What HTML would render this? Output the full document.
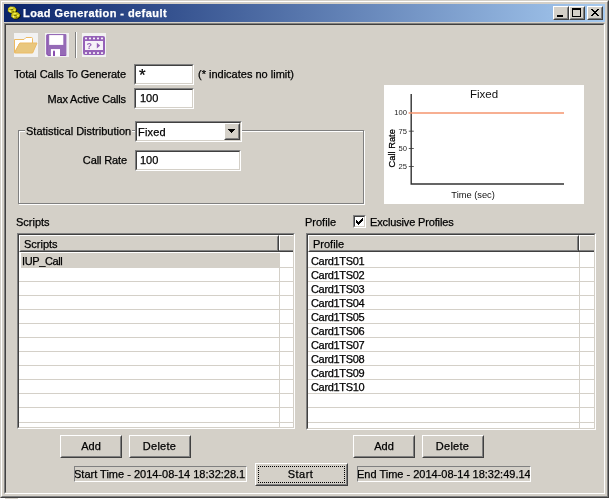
<!DOCTYPE html>
<html>
<head>
<meta charset="utf-8">
<title>Load Generation - default</title>
<style>
html,body{margin:0;padding:0;}
body{width:609px;height:499px;background:#fff;position:relative;overflow:hidden;
  font-family:"Liberation Sans",sans-serif;font-size:11px;color:#000;line-height:13px;-webkit-text-stroke-width:0.25px;}
.abs,.t,.lbl,.inp,.btn,.hl,.vl{position:absolute;}
#win{position:absolute;left:0;top:0;width:609px;height:498px;background:#d4d0c8;will-change:transform;}
.t{white-space:nowrap;height:13px;line-height:13px;}
.r{text-align:right;}
.inp{background:#fff;box-sizing:border-box;border:1px solid;border-color:#808080 #fff #fff #808080;}
.inp:before{content:"";position:absolute;left:0;top:0;right:0;bottom:0;border:1px solid;border-color:#404040 #d4d0c8 #d4d0c8 #404040;}
.btn{box-sizing:border-box;background:#d4d0c8;border:1px solid;border-color:#fff #404040 #404040 #fff;text-align:center;}
.btn:before{content:"";position:absolute;left:0;top:0;right:0;bottom:0;border:1px solid;border-color:#d4d0c8 #808080 #808080 #d4d0c8;}
.btn span{position:absolute;left:0;right:0;white-space:nowrap;}
.pane{position:absolute;box-sizing:border-box;background:#fff;border:1px solid;border-color:#808080 #fff #fff #808080;}
.pane:before{content:"";position:absolute;left:0;top:0;right:0;bottom:0;border:1px solid;border-color:#404040 #d4d0c8 #d4d0c8 #404040;}
.hd{position:absolute;box-sizing:border-box;background:#d4d0c8;border:1px solid;border-color:#fff #404040 #404040 #fff;}
.hd:before{content:"";position:absolute;left:0;top:0;right:0;bottom:0;border:1px solid;border-color:#d4d0c8 #808080 #808080 #d4d0c8;}
.gl{position:absolute;background:#d4d0c8;}
.st{position:absolute;box-sizing:border-box;border:1px solid;border-color:#808080 #fff #fff #808080;overflow:hidden;}
.cap{position:absolute;box-sizing:border-box;width:16px;height:14px;top:6px;background:#d4d0c8;border:1px solid;border-color:#fff #404040 #404040 #fff;}
.cap:before{content:"";position:absolute;left:0;top:0;right:0;bottom:0;border:1px solid;border-color:#d4d0c8 #808080 #808080 #d4d0c8;}
</style>
</head>
<body>
<div id="win">
  <!-- outer window frame -->
  <div class="abs" style="left:0;top:0;width:609px;height:498px;box-sizing:border-box;border:1px solid;border-color:#d4d0c8 #404040 #404040 #d4d0c8;"></div>
  <div class="abs" style="left:1px;top:1px;width:607px;height:496px;box-sizing:border-box;border:1px solid;border-color:#fff #808080 #808080 #fff;"></div>

  <!-- title bar -->
  <div class="abs" id="title" style="left:4px;top:4px;width:601px;height:18px;background:linear-gradient(to right,#0a246a 0%,#a6caf0 100%);"></div>
  <svg class="abs" style="left:6px;top:5px" width="16" height="16" viewBox="0 0 16 16">
    <g fill="#101008">
      <path d="M2.6 3.6 L4.6 2 L8.8 2.2 L11.3 4.6 L10.8 6.8 L8.6 8.6 L5 8.8 L2.4 7 Z"/>
      <path d="M6 9.2 L8 7.4 L12.4 7.6 L14.8 10 L14.4 12.2 L12 14.2 L8.6 14.6 L5.8 12.4 Z"/>
    </g>
    <g fill="#c4bc10">
      <path d="M2 3.2 L4.2 1.6 L8.2 1.8 L10.4 4 L10 6.2 L8 7.8 L4.4 8 L1.8 6.2 Z"/>
      <path d="M5.4 8.8 L7.6 7 L11.8 7.2 L14 9.4 L13.6 11.6 L11.4 13.4 L8 13.8 L5.2 11.8 Z"/>
    </g>
    <g fill="#f2ee50">
      <path d="M3 3 L5 2.2 L7.4 2.6 L6 3.6 L3.6 4 Z M2.4 5.4 L4 5 L5.4 6.4 L4 7.2 Z M7.4 4.6 L9.4 4.4 L9 5.8 L7.6 6 Z"/>
      <path d="M6.4 9 L8.6 7.8 L11 8.2 L9.4 9.2 L7 9.6 Z M6 11 L7.6 10.6 L8.8 12 L7.6 12.8 Z M11 10 L13 9.8 L12.6 11.4 L11.2 11.6 Z"/>
    </g>
    <g fill="#5a5608">
      <path d="M4.4 4.4 L7 4 L7.2 4.8 L4.6 5.2 Z M8 10.2 L10.6 9.8 L10.8 10.6 L8.2 11 Z M6.2 6.6 L8 6.2 L8.2 7 L6.6 7.4 Z M9.8 12 L11.4 11.8 L11.4 12.6 L10 12.8 Z"/>
    </g>
    <g fill="#e8e8d8"><rect x="3.4" y="5.6" width="1.2" height="1"/><rect x="7" y="11.2" width="1.2" height="1"/><rect x="5.6" y="2.8" width="1" height="0.8"/></g>
  </svg>
  <div class="t" style="left:23px;top:7px;color:#fff;font-weight:bold;letter-spacing:0.43px;">Load Generation - default</div>

  <!-- caption buttons -->
  <div class="cap" style="left:553px;"><div class="abs" style="left:3px;top:8px;width:6px;height:2px;background:#000"></div></div>
  <div class="cap" style="left:569px;"><div class="abs" style="left:2px;top:1px;width:9px;height:9px;box-sizing:border-box;border:1px solid #000;border-top-width:2px;"></div></div>
  <div class="cap" style="left:587px;">
    <svg class="abs" style="left:3px;top:2px" width="8" height="7" viewBox="0 0 8 7" shape-rendering="crispEdges"><path d="M0 0h2v1h-2zM6 0h2v1h-2zM1 1h2v1h-2zM5 1h2v1h-2zM2 2h4v1h-4zM3 3h2v1h-2zM2 4h4v1h-4zM1 5h2v1h-2zM5 5h2v1h-2zM0 6h2v1h-2zM6 6h2v1h-2z" fill="#000"/></svg>
  </div>

  <!-- client sunken edge -->
  <div class="abs" style="left:4px;top:23px;width:601px;height:471px;box-sizing:border-box;border:1px solid;border-color:#808080 #fff #fff #808080;"></div>
  <div class="abs" style="left:5px;top:24px;width:599px;height:469px;box-sizing:border-box;border:1px solid;border-color:#404040 #d4d0c8 #d4d0c8 #404040;"></div>

  <!-- toolbar -->
  <svg class="abs" style="left:14px;top:33px" width="24" height="24" viewBox="0 0 24 24">
    <rect width="24" height="24" fill="#f2f2f2"/>
    <path d="M0.5 19.5 L0.5 6.5 L10 6.5 L12 4.5 L17.5 4.5 Q18.5 4.5 18.5 5.5 L18.5 10.5 L5.5 10.5 Z" fill="#fff" stroke="#edba62" stroke-width="1"/>
    <path d="M5.8 10 L23 10 L18.6 20 L0.6 20 Z" fill="#e9c77e" stroke="#ebbb66" stroke-width="1" stroke-linejoin="round"/>
  </svg>
  <svg class="abs" style="left:45px;top:33px" width="24" height="24" viewBox="0 0 24 24">
    <rect width="24" height="24" fill="#f2f2f2"/>
    <path d="M2.8 1 L20.3 1 Q21.4 1 21.4 2.1 L21.4 21.9 Q21.4 23 20.3 23 L3.2 23 L1.4 21.4 L1.4 2.3 Q1.4 1 2.8 1 Z" fill="#956ab6"/>
    <path d="M1.9 2.3 L1.9 21.2 L3.4 22.5 L20.3 22.5 Q20.9 22.5 20.9 21.9" fill="none" stroke="#8a4fb0" stroke-width="1"/>
    <rect x="4.2" y="2.1" width="14.1" height="9.8" fill="#fff"/>
    <rect x="5.9" y="16.1" width="9.1" height="6.9" fill="#fff"/>
    <path d="M8 23 L8 18.4 Q8 17.4 9 17.4 Q10 17.4 10 18.4 L10 23 Z" fill="#8a4fb0"/>
  </svg>
  <div class="abs" style="left:75px;top:32px;width:1px;height:26px;background:#808080"></div>
  <div class="abs" style="left:76px;top:32px;width:1px;height:26px;background:#fff"></div>
  <svg class="abs" style="left:82px;top:33px" width="24" height="24" viewBox="0 0 24 24">
    <rect width="24" height="24" fill="#f2f2f2"/>
    <rect x="1" y="3" width="22" height="19" rx="2" ry="2" fill="#9561b8"/>
    <rect x="3" y="8" width="18" height="9" fill="#f6f2f8"/>
    <g fill="#fff">
      <rect x="3.1" y="4.6" width="1.8" height="1.7"/><rect x="7.1" y="4.6" width="1.8" height="1.7"/><rect x="11.1" y="4.6" width="1.8" height="1.7"/><rect x="15.1" y="4.6" width="1.8" height="1.7"/><rect x="19.1" y="4.6" width="1.8" height="1.7"/>
      <rect x="3.1" y="19.2" width="1.8" height="1.7"/><rect x="7.1" y="19.2" width="1.8" height="1.7"/><rect x="11.1" y="19.2" width="1.8" height="1.7"/><rect x="15.1" y="19.2" width="1.8" height="1.7"/><rect x="19.1" y="19.2" width="1.8" height="1.7"/>
    </g>
    <text x="7.3" y="15.6" font-family="Liberation Sans, sans-serif" font-size="9" font-weight="bold" fill="#9561b8" text-anchor="middle">?</text>
    <path d="M14.8 9.8 L18.2 12.6 L14.8 15.4 Z" fill="#9561b8"/>
  </svg>

  <!-- form fields -->
  <div class="t r" style="left:0;width:126px;top:68px;letter-spacing:-0.09px;">Total Calls To Generate</div>
  <div class="inp" style="left:134px;top:64px;width:60px;height:21px;"></div>
  <div class="t" style="left:139px;top:67px;font-size:17px;line-height:17px;height:17px;">*</div>
  <div class="t" style="left:198px;top:68px;">(* indicates no limit)</div>

  <div class="t r" style="left:0;width:126px;top:93px;letter-spacing:-0.13px;">Max Active Calls</div>
  <div class="inp" style="left:134px;top:88px;width:60px;height:21px;"></div>
  <div class="t" style="left:140px;top:92px;">100</div>

  <!-- group box -->
  <div class="abs" style="left:19px;top:131px;width:346px;height:74px;box-sizing:border-box;border:1px solid #fff;"></div>
  <div class="abs" style="left:18px;top:130px;width:346px;height:74px;box-sizing:border-box;border:1px solid #808080;"></div>
  <div class="abs" style="left:25px;top:128px;width:217px;height:6px;background:#d4d0c8;"></div>
  <div class="abs" style="left:132px;top:130px;width:3px;height:1px;background:#808080;"></div>
  <div class="abs" style="left:132px;top:131px;width:3px;height:1px;background:#fff;"></div>
  <div class="t" style="left:26px;top:125px;">Statistical Distribution</div>

  <div class="inp" style="left:135px;top:121px;width:107px;height:21px;"></div>
  <div class="t" style="left:138px;top:126px;letter-spacing:0.2px;">Fixed</div>
  <div class="btn" style="left:224px;top:123px;width:16px;height:17px;">
    <svg class="abs" style="left:3px;top:5px" width="7" height="4" viewBox="0 0 7 4" shape-rendering="crispEdges"><path d="M0 0h7v1h-7zM1 1h5v1h-5zM2 2h3v1h-3zM3 3h1v1h-1z" fill="#000"/></svg>
  </div>

  <div class="t r" style="left:0;width:127px;top:154px;letter-spacing:-0.12px;">Call Rate</div>
  <div class="inp" style="left:135px;top:150px;width:106px;height:21px;"></div>
  <div class="t" style="left:140px;top:154px;">100</div>

  <!-- chart -->
  <svg class="abs" style="left:384px;top:85px" width="200" height="119" viewBox="0 0 200 119" font-family="Liberation Sans, sans-serif">
    <rect width="200" height="119" fill="#fff"/>
    <text x="100" y="13" font-size="11.5" text-anchor="middle" fill="#111">Fixed</text>
    <path d="M27.2 9 L27.2 99 L180 99" fill="none" stroke="#333" stroke-width="1.4"/>
    <g stroke="#333" stroke-width="0.8"><path d="M24.8 46.2h5M24.8 63.5h5M24.8 81.5h5"/></g>
    <path d="M24.6 28 L180 28" stroke="#f4956e" stroke-width="1.7" fill="none"/>
    <g font-size="7.6" fill="#222" text-anchor="end">
      <text x="23" y="30.2">100</text><text x="23" y="48.6">75</text><text x="23" y="65.9">50</text><text x="23" y="83.9">25</text>
    </g>
    <text transform="translate(10.6,63.3) rotate(-90)" font-size="9.3" text-anchor="middle" fill="#000" stroke="#000" stroke-width="0.25">Call Rate</text>
    <text x="89.1" y="113.3" font-size="9.3" text-anchor="middle" fill="#111">Time (sec)</text>
  </svg>

  <!-- Scripts -->
  <div class="t" style="left:16px;top:216px;">Scripts</div>
  <div class="pane" style="left:17px;top:233px;width:278px;height:196px;"></div>
  <div class="hd" style="left:19px;top:235px;width:260px;height:17px;"></div>
  <div class="abs" style="left:279px;top:235px;width:14px;height:17px;background:#d4d0c8;border-left:1px solid #fff;border-top:1px solid #fff;box-sizing:border-box;"></div>
  <div class="abs" style="left:279px;top:250px;width:14px;height:1px;background:#808080;"></div>
  <div class="abs" style="left:279px;top:251px;width:14px;height:1px;background:#404040;"></div>
  <div class="t" style="left:24px;top:238px;">Scripts</div>
  <div class="abs" style="left:21px;top:253px;width:259px;height:15px;background:#d4d0c8;"></div>
  <div class="t" style="left:22px;top:255px;letter-spacing:-0.38px;">IUP_Call</div>
  <div class="gl" style="left:19px;top:281px;width:274px;height:1px;"></div>
  <div class="gl" style="left:19px;top:295px;width:274px;height:1px;"></div>
  <div class="gl" style="left:19px;top:309px;width:274px;height:1px;"></div>
  <div class="gl" style="left:19px;top:323px;width:274px;height:1px;"></div>
  <div class="gl" style="left:19px;top:337px;width:274px;height:1px;"></div>
  <div class="gl" style="left:19px;top:351px;width:274px;height:1px;"></div>
  <div class="gl" style="left:19px;top:365px;width:274px;height:1px;"></div>
  <div class="gl" style="left:19px;top:379px;width:274px;height:1px;"></div>
  <div class="gl" style="left:19px;top:393px;width:274px;height:1px;"></div>
  <div class="gl" style="left:19px;top:407px;width:274px;height:1px;"></div>
  <div class="gl" style="left:19px;top:422px;width:274px;height:1px;"></div>
  <div class="gl" style="left:279px;top:268px;width:1px;height:159px;"></div>
  <div class="gl" style="left:280px;top:267px;width:13px;height:1px;"></div>

  <!-- Profile -->
  <div class="t" style="left:305px;top:216px;">Profile</div>
  <div class="inp" style="left:353px;top:215px;width:13px;height:13px;"></div>
  <svg class="abs" style="left:356px;top:218px" width="7" height="7" viewBox="0 0 7 7" shape-rendering="crispEdges"><path d="M0 2h1v3h-1zM1 3h1v3h-1zM2 4h1v3h-1zM3 3h1v3h-1zM4 2h1v3h-1zM5 1h1v3h-1zM6 0h1v3h-1z" fill="#000"/></svg>
  <div class="t" style="left:370px;top:216px;letter-spacing:-0.15px;">Exclusive Profiles</div>
  <div class="pane" style="left:306px;top:233px;width:290px;height:197px;"></div>
  <div class="hd" style="left:308px;top:235px;width:271px;height:17px;"></div>
  <div class="abs" style="left:579px;top:235px;width:15px;height:17px;background:#d4d0c8;border-left:1px solid #fff;border-top:1px solid #fff;box-sizing:border-box;"></div>
  <div class="abs" style="left:579px;top:250px;width:15px;height:1px;background:#808080;"></div>
  <div class="abs" style="left:579px;top:251px;width:15px;height:1px;background:#404040;"></div>
  <div class="t" style="left:313px;top:238px;">Profile</div>
  <div class="gl" style="left:308px;top:267px;width:286px;height:1px;"></div>
  <div class="gl" style="left:308px;top:281px;width:286px;height:1px;"></div>
  <div class="gl" style="left:308px;top:295px;width:286px;height:1px;"></div>
  <div class="gl" style="left:308px;top:309px;width:286px;height:1px;"></div>
  <div class="gl" style="left:308px;top:323px;width:286px;height:1px;"></div>
  <div class="gl" style="left:308px;top:337px;width:286px;height:1px;"></div>
  <div class="gl" style="left:308px;top:351px;width:286px;height:1px;"></div>
  <div class="gl" style="left:308px;top:365px;width:286px;height:1px;"></div>
  <div class="gl" style="left:308px;top:379px;width:286px;height:1px;"></div>
  <div class="gl" style="left:308px;top:393px;width:286px;height:1px;"></div>
  <div class="gl" style="left:308px;top:407px;width:286px;height:1px;"></div>
  <div class="gl" style="left:308px;top:422px;width:286px;height:1px;"></div>
  <div class="gl" style="left:579px;top:252px;width:1px;height:176px;"></div>
  <div class="t" style="left:311px;top:255px;letter-spacing:-0.33px;">Card1TS01</div>
  <div class="t" style="left:311px;top:269px;letter-spacing:-0.33px;">Card1TS02</div>
  <div class="t" style="left:311px;top:283px;letter-spacing:-0.33px;">Card1TS03</div>
  <div class="t" style="left:311px;top:297px;letter-spacing:-0.33px;">Card1TS04</div>
  <div class="t" style="left:311px;top:311px;letter-spacing:-0.33px;">Card1TS05</div>
  <div class="t" style="left:311px;top:325px;letter-spacing:-0.33px;">Card1TS06</div>
  <div class="t" style="left:311px;top:339px;letter-spacing:-0.33px;">Card1TS07</div>
  <div class="t" style="left:311px;top:353px;letter-spacing:-0.33px;">Card1TS08</div>
  <div class="t" style="left:311px;top:367px;letter-spacing:-0.33px;">Card1TS09</div>
  <div class="t" style="left:311px;top:381px;letter-spacing:-0.33px;">Card1TS10</div>

  <!-- buttons -->
  <div class="btn" style="left:60px;top:435px;width:62px;height:23px;"><span style="top:4px">Add</span></div>
  <div class="btn" style="left:129px;top:435px;width:62px;height:23px;"><span style="top:4px;letter-spacing:0.25px;left:-1px">Delete</span></div>
  <div class="btn" style="left:353px;top:435px;width:62px;height:23px;"><span style="top:4px">Add</span></div>
  <div class="btn" style="left:422px;top:435px;width:62px;height:23px;"><span style="top:4px;letter-spacing:0.25px;left:-1px">Delete</span></div>

  <div class="st" style="left:74px;top:466px;width:173px;height:16px;"><div class="t" style="left:-1px;top:1px;">Start Time - 2014-08-14 18:32:28.1</div></div>
  <div class="btn" style="left:255px;top:463px;width:93px;height:23px;"><span style="top:4px;letter-spacing:0.5px;left:-2px">Start</span>
    <div class="abs" style="left:2px;top:2px;right:2px;bottom:2px;border:1px dotted #000;"></div>
  </div>
  <div class="st" style="left:357px;top:466px;width:174px;height:16px;"><div class="t" style="left:-1px;top:1px;">End Time - 2014-08-14 18:32:49.14</div></div>
</div>
<div class="abs" style="left:5px;top:498px;width:13px;height:1px;background:#d4d0c8;"></div>
</body>
</html>
